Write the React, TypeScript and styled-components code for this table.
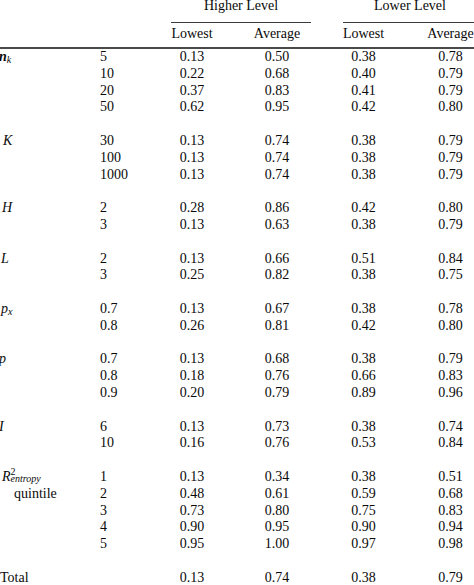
import React from "react";
import styled, { createGlobalStyle } from "styled-components";

const ROW = "16.8px";

const GlobalStyle = createGlobalStyle`
  html, body {
    margin: 0;
    padding: 0;
    background: #ffffff;
    overflow: hidden;
  }
  body {
    width: 474px;
    height: 585px;
    font-family: "Liberation Serif", "Times New Roman", serif;
    font-size: 14px;
    color: #0a0a0a;
  }
`;

const Table = styled.table`
  width: 494px;
  margin-top: -2px;
  table-layout: fixed;
  border-collapse: collapse;
  border-spacing: 0;
  font-size: 14px;
  line-height: ${ROW};
`;

const GroupHead = styled.th<{ $left: number; $right: number }>`
  padding: 0 ${(p) => p.$right}px 0 ${(p) => p.$left}px;
  font-weight: normal;
`;

const GroupLabel = styled.div`
  text-align: center;
  padding-bottom: 7px;
  border-bottom: 1px solid #3a3a3a;
  white-space: nowrap;
`;

const SubHead = styled.th`
  padding: 3.5px 0 4px;
  font-weight: normal;
  text-align: center;
  border-bottom: 2px solid #4a4a4a;
  white-space: nowrap;
`;

const Spacer = styled.td`
  height: ${ROW};
  padding: 0;
`;

const Label = styled.td`
  height: ${ROW};
  padding: 0;
  white-space: nowrap;
  overflow: visible;
`;

const Level = styled.td`
  padding: 0;
  text-align: left;
  white-space: nowrap;
`;

const Value = styled.td`
  padding: 0;
  text-align: center;
  white-space: nowrap;
`;

const Sym = styled.span<{ $bold?: boolean; $shift?: number }>`
  font-style: italic;
  font-weight: ${(p) => (p.$bold ? "bold" : "normal")};
  margin-left: ${(p) => p.$shift ?? 0}px;
`;

const Sub = styled.span`
  font-size: 10px;
  font-weight: normal;
  vertical-align: -2px;
  line-height: 0;
`;

const Sup = styled.span`
  font-size: 10px;
  font-style: normal;
  vertical-align: 6px;
  line-height: 0;
`;

const Lower = styled.span`
  font-size: 10px;
  vertical-align: -1px;
  line-height: 0;
  margin-left: -5px;
`;

const Indent = styled.span`
  display: inline-block;
  padding-left: 14px;
`;

type Row = [string, string, string, string, string];
type Group = { label: React.ReactNode; sub?: React.ReactNode; rows: Row[] };

const groups: Group[] = [
  {
    label: (
      <Sym $bold $shift={-1}>
        n<Sub>k</Sub>
      </Sym>
    ),
    rows: [
      ["5", "0.13", "0.50", "0.38", "0.78"],
      ["10", "0.22", "0.68", "0.40", "0.79"],
      ["20", "0.37", "0.83", "0.41", "0.79"],
      ["50", "0.62", "0.95", "0.42", "0.80"],
    ],
  },
  {
    label: <Sym $shift={3}>K</Sym>,
    rows: [
      ["30", "0.13", "0.74", "0.38", "0.79"],
      ["100", "0.13", "0.74", "0.38", "0.79"],
      ["1000", "0.13", "0.74", "0.38", "0.79"],
    ],
  },
  {
    label: <Sym $shift={2}>H</Sym>,
    rows: [
      ["2", "0.28", "0.86", "0.42", "0.80"],
      ["3", "0.13", "0.63", "0.38", "0.79"],
    ],
  },
  {
    label: <Sym $shift={1}>L</Sym>,
    rows: [
      ["2", "0.13", "0.66", "0.51", "0.84"],
      ["3", "0.25", "0.82", "0.38", "0.75"],
    ],
  },
  {
    label: (
      <Sym $shift={1}>
        p<Sub>x</Sub>
      </Sym>
    ),
    rows: [
      ["0.7", "0.13", "0.67", "0.38", "0.78"],
      ["0.8", "0.26", "0.81", "0.42", "0.80"],
    ],
  },
  {
    label: <Sym $shift={-1}>p</Sym>,
    rows: [
      ["0.7", "0.13", "0.68", "0.38", "0.79"],
      ["0.8", "0.18", "0.76", "0.66", "0.83"],
      ["0.9", "0.20", "0.79", "0.89", "0.96"],
    ],
  },
  {
    label: <Sym $shift={-1}>I</Sym>,
    rows: [
      ["6", "0.13", "0.73", "0.38", "0.74"],
      ["10", "0.16", "0.76", "0.53", "0.84"],
    ],
  },
  {
    label: (
      <Sym $shift={2}>
        R<Sup>2</Sup>
        <Lower>entropy</Lower>
      </Sym>
    ),
    sub: <Indent>quintile</Indent>,
    rows: [
      ["1", "0.13", "0.34", "0.38", "0.51"],
      ["2", "0.48", "0.61", "0.59", "0.68"],
      ["3", "0.73", "0.80", "0.75", "0.83"],
      ["4", "0.90", "0.95", "0.90", "0.94"],
      ["5", "0.95", "1.00", "0.97", "0.98"],
    ],
  },
  {
    label: "Total",
    rows: [["", "0.13", "0.74", "0.38", "0.79"]],
  },
];

export default function App() {
  return (
    <>
      <GlobalStyle />
      <Table>
        <colgroup>
          <col style={{ width: 100 }} />
          <col style={{ width: 50 }} />
          <col style={{ width: 84 }} />
          <col style={{ width: 86 }} />
          <col style={{ width: 87 }} />
          <col style={{ width: 87 }} />
        </colgroup>
        <thead>
          <tr>
            <th colSpan={2} />
            <GroupHead colSpan={2} $left={21} $right={9}>
              <GroupLabel>Higher Level</GroupLabel>
            </GroupHead>
            <GroupHead colSpan={2} $left={23} $right={17}>
              <GroupLabel>Lower Level</GroupLabel>
            </GroupHead>
          </tr>
          <tr>
            <SubHead />
            <SubHead />
            <SubHead>Lowest</SubHead>
            <SubHead>Average</SubHead>
            <SubHead>Lowest</SubHead>
            <SubHead>Average</SubHead>
          </tr>
        </thead>
        <tbody>
          {groups.map((g, gi) => (
            <React.Fragment key={gi}>
              {gi > 0 && (
                <tr>
                  <Spacer colSpan={6} />
                </tr>
              )}
              {g.rows.map((r, ri) => (
                <tr key={ri}>
                  <Label>{ri === 0 ? g.label : ri === 1 ? g.sub : null}</Label>
                  <Level>{r[0]}</Level>
                  <Value>{r[1]}</Value>
                  <Value>{r[2]}</Value>
                  <Value>{r[3]}</Value>
                  <Value>{r[4]}</Value>
                </tr>
              ))}
            </React.Fragment>
          ))}
        </tbody>
      </Table>
    </>
  );
}
